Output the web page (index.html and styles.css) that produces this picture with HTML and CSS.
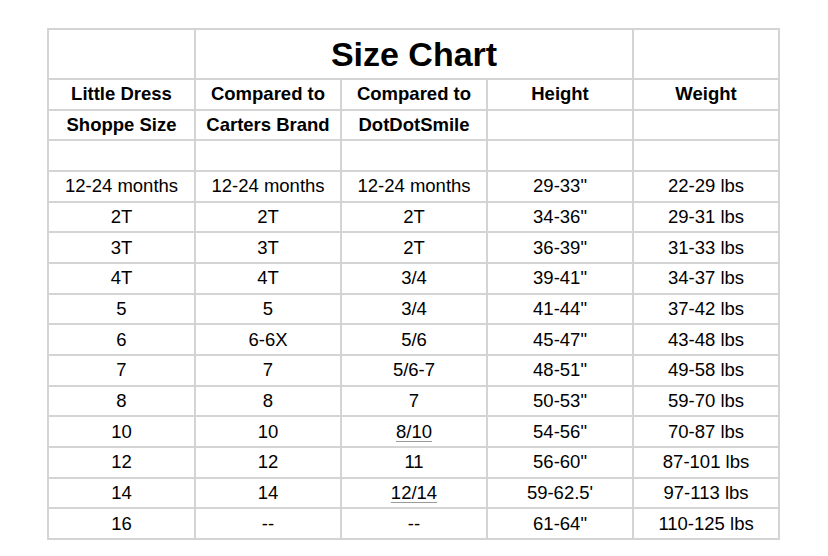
FILE: index.html
```html
<!DOCTYPE html>
<html>
<head>
<meta charset="utf-8">
<link rel="stylesheet" href="styles.css">
</head>
<body>
<table class="chart">
  <colgroup>
    <col class="c1"><col class="c"><col class="c"><col class="c"><col class="c">
  </colgroup>
  <tr class="title-row"><td></td><td colspan="3" class="title">Size Chart</td><td></td></tr>
  <tr class="head"><td>Little Dress</td><td>Compared to</td><td>Compared to</td><td>Height</td><td>Weight</td></tr>
  <tr class="head"><td>Shoppe Size</td><td>Carters Brand</td><td>DotDotSmile</td><td></td><td></td></tr>
  <tr><td></td><td></td><td></td><td></td><td></td></tr>
  <tr><td>12-24 months</td><td>12-24 months</td><td>12-24 months</td><td>29-33"</td><td>22-29 lbs</td></tr>
  <tr><td>2T</td><td>2T</td><td>2T</td><td>34-36"</td><td>29-31 lbs</td></tr>
  <tr><td>3T</td><td>3T</td><td>2T</td><td>36-39"</td><td>31-33 lbs</td></tr>
  <tr><td>4T</td><td>4T</td><td>3/4</td><td>39-41"</td><td>34-37 lbs</td></tr>
  <tr><td>5</td><td>5</td><td>3/4</td><td>41-44"</td><td>37-42 lbs</td></tr>
  <tr><td>6</td><td>6-6X</td><td>5/6</td><td>45-47"</td><td>43-48 lbs</td></tr>
  <tr><td>7</td><td>7</td><td>5/6-7</td><td>48-51"</td><td>49-58 lbs</td></tr>
  <tr><td>8</td><td>8</td><td>7</td><td>50-53"</td><td>59-70 lbs</td></tr>
  <tr><td>10</td><td>10</td><td><span class="ul">8/10</span></td><td>54-56"</td><td>70-87 lbs</td></tr>
  <tr><td>12</td><td>12</td><td>11</td><td>56-60"</td><td>87-101 lbs</td></tr>
  <tr><td>14</td><td>14</td><td><span class="ul">12/14</span></td><td>59-62.5'</td><td>97-113 lbs</td></tr>
  <tr><td>16</td><td>--</td><td>--</td><td>61-64"</td><td>110-125 lbs</td></tr>
</table>
</body>
</html>
```

FILE: styles.css
```css
html, body {
  margin: 0;
  background: #ffffff;
}
body {
  padding: 28px 0 0 47px;
  font-family: "Liberation Sans", Arial, sans-serif;
  color: #000;
}
.chart {
  border-collapse: collapse;
  table-layout: fixed;
  width: 731px;
}
.c1 { width: 147px; }
.c { width: 146px; }
.chart td {
  border: 2px solid #d4d4d4;
  text-align: center;
  vertical-align: middle;
  padding: 0;
  font-size: 18.5px;
  line-height: 20px;
  height: 28.67px;
  white-space: nowrap;
  overflow: hidden;
}
.title-row td {
  height: 48px;
}
.chart td.title {
  font-size: 34px;
  font-weight: bold;
  line-height: 40px;
}
.head td {
  font-weight: bold;
}
.ul {
  text-decoration: underline;
  text-decoration-color: #9a9a9a;
  text-decoration-thickness: 1px;
  text-underline-offset: 3px;
}
```
